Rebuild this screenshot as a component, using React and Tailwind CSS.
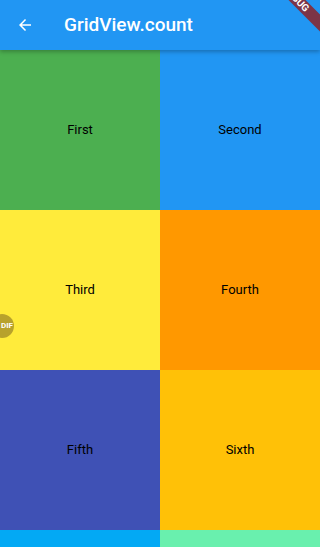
const cells = [
  { label: 'First', bg: 'bg-[#4caf50]' },
  { label: 'Second', bg: 'bg-[#2196f3]' },
  { label: 'Third', bg: 'bg-[#ffeb3b]' },
  { label: 'Fourth', bg: 'bg-[#ff9800]' },
  { label: 'Fifth', bg: 'bg-[#3f51b5]' },
  { label: 'Sixth', bg: 'bg-[#ffc107]' },
  { label: 'Seventh', bg: 'bg-[#03a9f4]' },
  { label: 'Eighth', bg: 'bg-[#69f0ae]' },
]

export default function App() {
  return (
    <div className="relative h-[547px] w-[320px] overflow-hidden bg-white font-['Roboto',sans-serif]">
      {/* App bar */}
      <div className="relative z-10 flex h-[50px] items-center bg-[#2196f3] shadow-[0_2px_4px_rgba(0,0,0,0.25)]">
        <button className="flex h-[50px] w-[50px] items-center justify-center text-white">
          <svg width="18" height="18" viewBox="0 0 24 24" fill="white">
            <path d="M20 11H7.83l5.59-5.59L12 4l-8 8 8 8 1.41-1.41L7.83 13H20v-2z" />
          </svg>
        </button>
        <h1 className="ml-[14px] text-[19px] font-medium text-white">GridView.count</h1>
      </div>

      {/* Grid */}
      <div className="grid grid-cols-2">
        {cells.map((c) => (
          <div key={c.label} className={`flex h-[160px] items-center justify-center ${c.bg}`}>
            <span className="text-[13px] text-black">{c.label}</span>
          </div>
        ))}
      </div>

      {/* side bubble */}
      <div className="absolute left-[-10px] top-[314px] flex h-[24px] w-[24px] items-center justify-end rounded-full bg-[#b8a22c] pr-[1px]">
        <span className="text-[8px] font-bold leading-none text-white">DIF</span>
      </div>

      {/* debug banner */}
      <div className="absolute left-[246px] top-[-7px] z-20 h-[12px] w-[100px] rotate-45 bg-[#7c3447] text-center text-[10px] font-bold leading-[12px] text-white">
        DEBUG
      </div>
    </div>
  )
}
